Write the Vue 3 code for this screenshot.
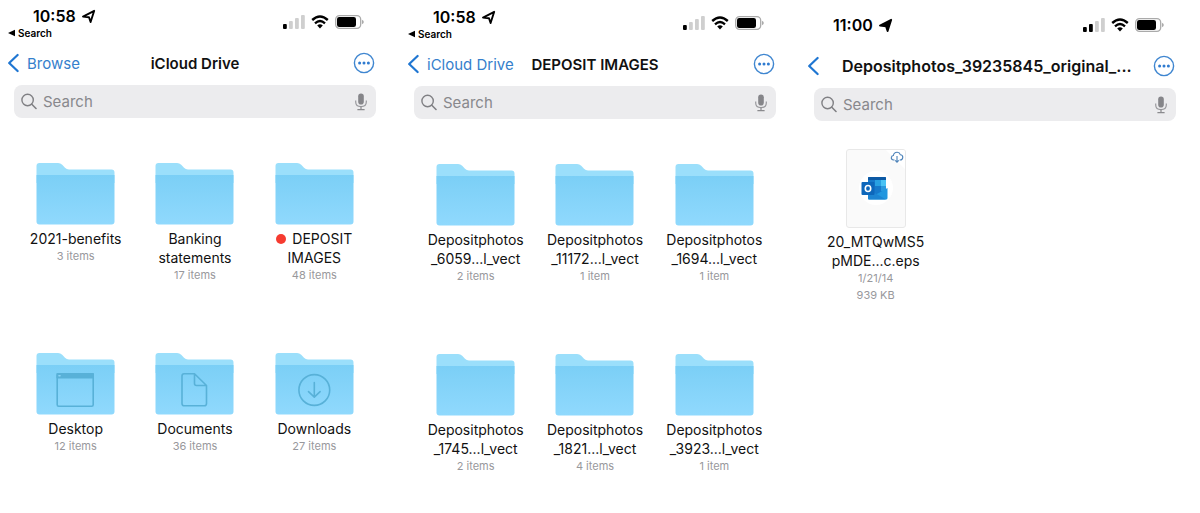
<script setup>
const screens = [
  {
    id: 'drive', kind: 'first', time: '10:58', outline: true, returnTo: 'Search', bars: 1,
    back: 'Browse', title: 'iCloud Drive',
    items: [
      { lines: ['2021-benefits'], meta: ['3 items'] },
      { lines: ['Banking', 'statements'], meta: ['17 items'] },
      { lines: ['DEPOSIT', 'IMAGES'], meta: ['48 items'], tag: true },
      { lines: ['Desktop'], meta: ['12 items'], glyph: 'desktop' },
      { lines: ['Documents'], meta: ['36 items'], glyph: 'document' },
      { lines: ['Downloads'], meta: ['27 items'], glyph: 'download' },
    ],
  },
  {
    id: 'images', kind: 'second', time: '10:58', outline: true, returnTo: 'Search', bars: 1,
    back: 'iCloud Drive', title: 'DEPOSIT IMAGES',
    items: [
      { lines: ['Depositphotos', '_6059...l_vect'], meta: ['2 items'] },
      { lines: ['Depositphotos', '_11172...l_vect'], meta: ['1 item'] },
      { lines: ['Depositphotos', '_1694...l_vect'], meta: ['1 item'] },
      { lines: ['Depositphotos', '_1745...l_vect'], meta: ['2 items'] },
      { lines: ['Depositphotos', '_1821...l_vect'], meta: ['4 items'] },
      { lines: ['Depositphotos', '_3923...l_vect'], meta: ['1 item'] },
    ],
  },
  {
    id: 'file', kind: 'third', time: '11:00', outline: false, returnTo: '', bars: 2,
    back: '', title: 'Depositphotos_39235845_original_...',
    items: [
      { lines: ['20_MTQwMS5', 'pMDE...c.eps'], meta: ['1/21/14', '939 KB'], file: true },
    ],
  },
]
const barShapes = [
  { x: 0, y: 9, h: 5 },
  { x: 6, y: 6, h: 8 },
  { x: 12, y: 3, h: 11 },
  { x: 18, y: 0, h: 14 },
]
</script>

<template>
  <main class="screens">
    <section v-for="s in screens" :key="s.id" class="screen" :class="s.kind">
      <header class="status">
        <div class="status-left">
          <div class="clock">
            <span>{{ s.time }}</span>
            <svg width="15" height="15" viewBox="0 0 15 15" aria-hidden="true">
              <path d="M13.2 1.8 L2 7.6 L8 8.2 L9.6 13 Z" :fill="s.outline ? 'none' : '#000'" stroke="#000" stroke-width="1.9" stroke-linejoin="round" />
            </svg>
          </div>
          <button v-if="s.returnTo" type="button" class="return">
            <svg width="7" height="8" viewBox="0 0 7 8" aria-hidden="true"><path d="M0 4 L7 0.8 V7.2 Z" fill="#000" /></svg>
            <span>{{ s.returnTo }}</span>
          </button>
        </div>
        <div class="status-right">
          <svg width="22" height="14" viewBox="0 0 22 14" aria-hidden="true">
            <rect v-for="(b, i) in barShapes" :key="i" :x="b.x" :y="b.y" width="3.8" :height="b.h" rx="1" :fill="i < s.bars ? '#000' : '#cfcfcf'" />
          </svg>
          <svg width="18" height="14" viewBox="0 0 18 14" aria-hidden="true">
            <path d="M1.2 5 Q9 -2 16.8 5" fill="none" stroke="#000" stroke-width="2.4" />
            <path d="M4 8.3 Q9 3.7 14 8.3" fill="none" stroke="#000" stroke-width="2.3" />
            <path d="M6.2 10.4 Q9 8.2 11.8 10.4 L9 13.4 Z" fill="#000" />
          </svg>
          <svg width="29" height="14" viewBox="0 0 29 14" aria-hidden="true">
            <rect x="0.7" y="0.7" width="25" height="12.6" rx="3.8" fill="#fff" stroke="#aaa" stroke-width="1.3" />
            <rect x="2" y="2" width="19" height="10" rx="2.2" fill="#000" />
            <path d="M27 4.8 Q28.8 5.6 28.8 7 Q28.8 8.4 27 9.2 Z" fill="#aaa" />
          </svg>
        </div>
      </header>

      <nav class="nav">
        <button type="button" class="back" :aria-label="s.back || 'Back'">
          <svg width="12" height="20" viewBox="0 0 12 20" aria-hidden="true">
            <path d="M9.6 2 L1.2 10 L9.6 18" fill="none" stroke="#1f76d2" stroke-width="2.2" stroke-linecap="round" stroke-linejoin="round" />
          </svg>
          <span v-if="s.back">{{ s.back }}</span>
        </button>
        <h1 class="title">{{ s.title }}</h1>
        <button type="button" class="more" aria-label="More">
          <svg width="22" height="22" viewBox="0 0 22 22" aria-hidden="true">
            <circle cx="11" cy="11" r="9.6" fill="none" stroke="#3f86d0" stroke-width="1.4" />
            <g fill="#2f7bd0"><circle cx="6.6" cy="11" r="1.5" /><circle cx="11" cy="11" r="1.5" /><circle cx="15.4" cy="11" r="1.5" /></g>
          </svg>
        </button>
      </nav>

      <div class="search">
        <svg width="16" height="17" viewBox="0 0 16 17" aria-hidden="true">
          <circle cx="6.6" cy="7" r="5.7" fill="none" stroke="#808084" stroke-width="1.4" />
          <path d="M10.8 11.2 L15 15.5" stroke="#808084" stroke-width="1.6" stroke-linecap="round" />
        </svg>
        <input type="text" placeholder="Search" aria-label="Search" />
        <button type="button" aria-label="Dictate">
          <svg width="12" height="18" viewBox="0 0 12 18" aria-hidden="true">
            <rect x="3.2" y="0.5" width="5.6" height="11" rx="2.8" fill="#858589" />
            <path d="M0.7 7.5 V9 Q0.7 13.6 6 13.6 Q11.3 13.6 11.3 9 V7.5" fill="none" stroke="#9a9a9e" stroke-width="1.2" />
            <path d="M6 13.6 V16.6 M2.4 16.7 H9.6" fill="none" stroke="#8a8a8e" stroke-width="1.2" />
          </svg>
        </button>
      </div>

      <div class="grid">
        <button v-for="(item, n) in s.items" :key="n" type="button" class="item">
          <span class="art">
            <svg v-if="item.file" width="62" height="79" viewBox="0 0 62 79" aria-hidden="true">
              <rect x="1.5" y="0.5" width="59" height="78" rx="2.5" fill="#fafafa" stroke="#e8e8e8" />
              <path d="M41 1 H58 Q60 1 60 3 V20 Z" fill="#fff" />
              <circle cx="31" cy="39" r="17" fill="#fff" />
              <rect x="23" y="28" width="18" height="22" rx="1" fill="#1679cb" />
              <path d="M23 29 Q23 28 24 28 H40 Q41 28 41 29 V31 H23 Z" fill="#0c59a4" />
              <rect x="30" y="31" width="6" height="6" fill="#28a0e2" />
              <rect x="36" y="31" width="5" height="6" fill="#48c2f4" />
              <rect x="36" y="37" width="5" height="5" fill="#2898de" />
              <path d="M23 50 L42.5 39 V49 Q42.5 50.5 41 50.5 H24 Z" fill="#2196df" />
              <path d="M23 40 L41 50.5 H24 Q23 50.5 23 49 Z" fill="#1c84d2" />
              <rect x="16.5" y="33" width="13" height="13" rx="1" fill="#0d67bb" />
              <ellipse cx="23" cy="39.5" rx="2.7" ry="3" fill="none" stroke="#fff" stroke-width="1.6" />
              <path d="M49.5 11 H48.7 Q46.3 10.8 46.3 8.7 Q46.4 6.8 48.4 6.5 Q49 3.2 52.2 3.3 Q54.7 3.5 55.4 5.8 Q57.8 6 57.8 8.4 Q57.6 11 55.2 11 H54.6" fill="none" stroke="#4c82b9" stroke-width="1.1" />
              <path d="M52 7 V13 M50.2 11.3 L52 13.1 L53.8 11.3" fill="none" stroke="#4c82b9" stroke-width="1.1" />
            </svg>
            <svg v-else width="79" height="62" viewBox="0 0 79 62" aria-hidden="true">
              <defs>
                <linearGradient :id="`front-${s.id}-${n}`" x1="0" y1="0" x2="0" y2="1">
                  <stop offset="0" stop-color="#7bcff6" />
                  <stop offset="1" stop-color="#90d9fd" />
                </linearGradient>
              </defs>
              <path d="M0.5 3 Q0.5 0 3.5 0 H22 Q24.5 0 26.2 1.8 L29 4.8 Q30.6 6.5 33 6.5 H75.5 Q78.5 6.5 78.5 9.5 V20 H0.5 Z" fill="#9bdffb" />
              <path :fill="`url(#front-${s.id}-${n})`" d="M0.5 12 H78.5 V58.5 Q78.5 61.5 75.5 61.5 H3.5 Q0.5 61.5 0.5 58.5 Z" />
              <g v-if="item.glyph" fill="none" stroke="#58b1d8" stroke-width="1.6" stroke-linecap="round" stroke-linejoin="round">
                <template v-if="item.glyph === 'desktop'">
                  <rect x="21.2" y="20.7" width="36" height="32.6" rx="1.5" />
                  <path d="M21.2 20.7 H57.2 V24.7 H21.2 Z" fill="#58b1d8" />
                  <path d="M23 22.8 H24" stroke="#8bd5f7" />
                </template>
                <path v-else-if="item.glyph === 'document'" d="M29 20.7 H39.5 L51.5 32.5 V50.5 Q51.5 52.8 49.2 52.8 H29.3 Q27 52.8 27 50.5 V23 Q27 20.7 29 20.7 M39.5 20.7 V30.5 Q39.5 32.5 41.5 32.5 H51.5" />
                <template v-else>
                  <circle cx="39.3" cy="37" r="15.4" />
                  <path d="M39.3 29.5 V44 M33.5 38.6 L39.3 44.2 L45.1 38.6" />
                </template>
              </g>
            </svg>
          </span>
          <span v-for="(line, k) in item.lines" :key="line" class="name">
            <i v-if="item.tag && k === 0" class="tag"></i>{{ line }}
          </span>
          <span v-for="m in item.meta" :key="m" class="meta">{{ m }}</span>
        </button>
      </div>
    </section>
  </main>
</template>

<style>
body {
  background: #fff;
}
</style>

<style scoped>
.screens {
  display: grid;
  grid-template-columns: repeat(3, minmax(0, 1fr));
  font-family: Inter, "Liberation Sans", sans-serif;
  color: #111;
}
button {
  border: 0;
  padding: 0;
  background: none;
  font: inherit;
  color: inherit;
  cursor: pointer;
}
svg {
  display: block;
  flex: none;
}
.screen {
  padding: 6px 10px 0 0;
}
.second {
  padding-top: 7px;
}
.third {
  padding-top: 9px;
}
.status {
  display: flex;
  justify-content: space-between;
  align-items: flex-start;
  height: 42px;
  padding: 0 26px 0 8px;
  color: #000;
}
.clock {
  display: flex;
  align-items: center;
  gap: 5px;
  height: 20px;
  padding-left: 25px;
  font-size: 16px;
  font-weight: 600;
}
.third .clock {
  height: 32px;
}
.return {
  display: flex;
  align-items: center;
  gap: 3px;
  height: 14px;
  font-size: 10px;
  font-weight: 600;
}
.status-right {
  display: flex;
  align-items: center;
  gap: 6px;
  height: 32px;
}
.nav {
  display: grid;
  grid-template-columns: 1fr auto 1fr;
  align-items: center;
  height: 30px;
  padding: 0 8px;
  font-size: 15px;
}
.third .nav {
  grid-template-columns: 34px auto 1fr;
}
.back {
  display: flex;
  align-items: center;
  gap: 7px;
  color: #3580cc;
  white-space: nowrap;
}
.title {
  margin: 0;
  font-size: 15px;
  font-weight: 600;
  color: #111;
  white-space: nowrap;
}
.third .title {
  font-size: 16px;
}
.more {
  justify-self: end;
  padding-right: 7px;
}
.search {
  display: flex;
  align-items: center;
  gap: 6px;
  height: 33px;
  margin: 7px 14px 27px;
  padding: 0 9px 0 7px;
  border-radius: 8px;
  background: #ececee;
}
.search input {
  flex: 1;
  min-width: 0;
  border: 0;
  padding: 0;
  background: none;
  font: inherit;
  font-size: 15px;
  outline: none;
}
.search input::placeholder {
  color: #88888c;
  opacity: 1;
}
.grid {
  display: grid;
  grid-template-columns: repeat(3, minmax(0, 1fr));
  grid-auto-rows: 190px;
  padding: 0 16px;
}
.item {
  display: flex;
  flex-direction: column;
  align-items: center;
}
.art {
  display: flex;
  align-items: flex-end;
  height: 80px;
  margin-bottom: 4px;
}
.name {
  display: flex;
  align-items: center;
  font-size: 14px;
  line-height: 19px;
  white-space: nowrap;
}
.tag {
  width: 10px;
  height: 10px;
  margin-right: 6px;
  border-radius: 50%;
  background: #f63b30;
}
.meta {
  font-size: 11px;
  line-height: 17px;
  color: #98989c;
}
</style>
